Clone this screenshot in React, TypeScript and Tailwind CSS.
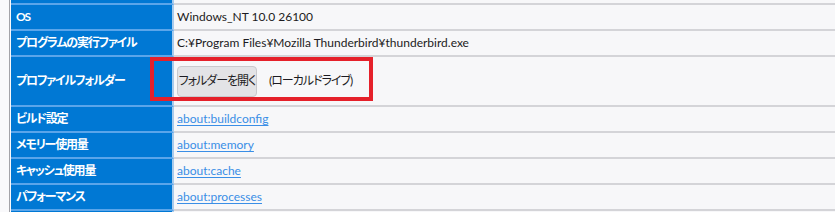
import React from 'react'

const font = 'Lato, "Noto Sans CJK JP", sans-serif'

type Row = { label: string; h: string; content: React.ReactNode }

const link = (text: string) => (
  <a href="#" className="text-[#3a8ee6] underline underline-offset-2">
    {text}
  </a>
)

const rows: Row[] = [
  { label: '', h: 'h-[3px]', content: null },
  { label: 'OS', h: 'h-[24px]', content: 'Windows_NT 10.0 26100' },
  {
    label: 'プログラムの実行ファイル',
    h: 'h-[24px]',
    content: 'C:¥Program Files¥Mozilla Thunderbird¥thunderbird.exe',
  },
  {
    label: 'プロファイルフォルダー',
    h: 'h-[48px]',
    content: (
      <div className="flex items-center">
        <button className="h-[31px] w-[80px] whitespace-nowrap rounded-[4px] border border-[#c9c9cd] bg-[#e3e3e6] text-[12px] tracking-[-1px] text-[#1c1b22]">
          フォルダーを開く
        </button>
        <span className="ml-[12px] text-[12px] tracking-[-1px]">(ローカルドライブ)</span>
      </div>
    ),
  },
  { label: 'ビルド設定', h: 'h-[24px]', content: link('about:buildconfig') },
  { label: 'メモリー使用量', h: 'h-[24px]', content: link('about:memory') },
  { label: 'キャッシュ使用量', h: 'h-[24px]', content: link('about:cache') },
  { label: 'パフォーマンス', h: 'h-[24px]', content: link('about:processes') },
  { label: '', h: 'h-[10px]', content: null },
]

export default function App() {
  return (
    <div
      className="relative h-[212px] w-[835px] overflow-hidden bg-[#f9f9fb] pl-[9px]"
      style={{ fontFamily: font, fontFeatureSettings: '"palt"' }}
    >
      <div className="flex flex-col border-l border-[#a3a3a8] pl-[1px]">
        {rows.map((row, i) => (
          <div key={i} className="flex">
            <div
              className={`${row.h} box-content flex w-[156px] items-center whitespace-nowrap border-b-2 border-r-2 border-b-[#5aa5ea] border-r-[#a9cbec] bg-[#0078d4] pl-[5px] text-[12px] font-bold tracking-[-1.2px] text-white`}
            >
              {row.label}
            </div>
            <div
              className={`${row.h} box-content flex flex-1 items-center border-b-2 border-[#d4d4d8] bg-[#f7f7f9] pl-[3px] text-[12px] text-[#1c1b22]`}
            >
              {row.content}
            </div>
          </div>
        ))}
      </div>
      <div className="pointer-events-none absolute left-[150px] top-[57px] h-[44px] w-[223px] border-4 border-[#e5202a]" />
    </div>
  )
}
